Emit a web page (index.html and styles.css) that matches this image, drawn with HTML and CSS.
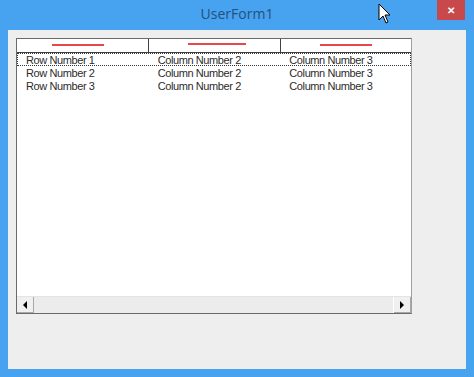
FILE: index.html
```html
<!DOCTYPE html>
<html lang="en">
<head>
    <meta charset="UTF-8">
    <title>UserForm1</title>
    <link rel="stylesheet" href="styles.css">
</head>
<body>
    <div class="window">
        <div class="titlebar">
            <span class="title">UserForm1</span>
            <button class="closeBtn">&#x2715;</button>
            <svg class="cursor" width="14" height="22" viewBox="0 0 14 22">
                <path d="M1 1 L1 17 L5 13 L8 20 L10 19 L7 12 L12 12 Z" fill="#fff" stroke="#000" stroke-width="1"/>
            </svg>
        </div>
        <div class="client">
            <div class="listbox">
                <div class="listHeader">
                    <div class="headCell"><span class="redline"></span></div>
                    <div class="headCell"><span class="redline mid"></span></div>
                    <div class="headCell"><span class="redline"></span></div>
                </div>
                <div class="rows">
                    <div class="row focused">
                        <span>Row Number 1</span><span>Column Number 2</span><span>Column Number 3</span>
                    </div>
                    <div class="row">
                        <span>Row Number 2</span><span>Column Number 2</span><span>Column Number 3</span>
                    </div>
                    <div class="row">
                        <span>Row Number 3</span><span>Column Number 2</span><span>Column Number 3</span>
                    </div>
                </div>
                <div class="hscroll">
                    <div class="scrollBtn"><span class="arrow left"></span></div>
                    <div class="track"></div>
                    <div class="scrollBtn"><span class="arrow right"></span></div>
                </div>
            </div>
        </div>
    </div>
</body>
</html>
```
FILE: styles.css
```css
* {
    box-sizing: border-box;
}
body {
    margin: 0;
    padding: 0;
    background: #47a2f0;
    font-family: "Liberation Sans", "DejaVu Sans", sans-serif;
}
.window {
    width: 474px;
    height: 377px;
    background: #47a2f0;
    display: flex;
    flex-direction: column;
}
.titlebar {
    position: relative;
    height: 30px;
    display: flex;
    justify-content: center;
    align-items: center;
}
.title {
    font-family: "Open Sans", "DejaVu Sans", sans-serif;
    font-size: 14px;
    color: #24507c;
    margin-top: -3px;
}
.closeBtn {
    position: absolute;
    top: 0;
    right: 9px;
    width: 28px;
    height: 20px;
    border: none;
    background: #c7494c;
    color: #fff;
    font-size: 10px;
    font-weight: bold;
    padding: 0;
}
.cursor {
    position: absolute;
    left: 378px;
    top: 3px;
}
.client {
    margin: 0 8px;
    height: 339px;
    background: #eeeeee;
    padding: 8px 0 0 8px;
}
.listbox {
    width: 396px;
    height: 276px;
    background: #fff;
    border: 1px solid #6a6a6a;
    border-right-color: #a0a0a0;
    display: flex;
    flex-direction: column;
}
.listHeader {
    height: 14px;
    display: flex;
    border-bottom: 1px solid #404040;
}
.headCell {
    display: flex;
    justify-content: center;
    align-items: center;
    border-right: 1px solid #404040;
}
.headCell:nth-child(1) {
    width: 132px;
    padding-right: 9px;
}
.headCell:nth-child(2) {
    width: 132px;
    padding-left: 4px;
}
.headCell:nth-child(3) {
    flex: 1;
    border-right: none;
}
.redline {
    width: 52px;
    height: 2px;
    background: #e8484a;
    margin-top: -1px;
}
.redline.mid {
    width: 58px;
    margin-top: -3px;
}
.rows {
    flex: 1;
}
.row {
    height: 13px;
    display: flex;
    align-items: center;
    font-size: 11px;
    letter-spacing: -0.4px;
    color: #2b2b2b;
    border: 1px dotted transparent;
}
.row.focused {
    border-color: #333;
}
.row span {
    width: 132px;
    padding-left: 8px;
    white-space: nowrap;
}
.row span:nth-child(2) {
    padding-left: 9px;
}
.row span:nth-child(3) {
    padding-left: 10px;
}
.hscroll {
    height: 17px;
    display: flex;
    background: #f0f0f0;
    border-top: 1px solid #e4e4e4;
}
.scrollBtn {
    width: 17px;
    display: flex;
    justify-content: center;
    align-items: center;
    background: #f0f0f0;
    border-right: 1px solid #a8a8a8;
    border-bottom: 1px solid #a8a8a8;
}
.track {
    flex: 1;
    background: #ececec;
    border-right: 1px solid #fff;
}
.arrow {
    width: 0;
    height: 0;
    border-top: 4px solid transparent;
    border-bottom: 4px solid transparent;
}
.arrow.left {
    border-right: 4px solid #000;
}
.arrow.right {
    border-left: 4px solid #000;
}
```
